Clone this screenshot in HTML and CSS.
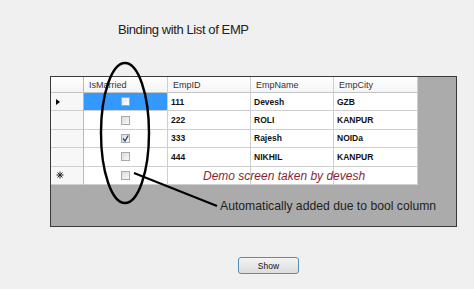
FILE: index.html
```html
<!DOCTYPE html>
<html lang="en">

<head>
    <meta charset="UTF-8">
    <title>Binding with List of EMP</title>
    <link rel="stylesheet" href="styles.css">
</head>

<body>
    <div class="page">
        <div class="title">Binding with List of EMP</div>

        <div class="grid-box">
            <div class="grid">
                <div class="cell head corner"></div>
                <div class="cell head">IsMarried</div>
                <div class="cell head">EmpID</div>
                <div class="cell head">EmpName</div>
                <div class="cell head">EmpCity</div>

                <div class="cell rowhead"><span class="current"></span></div>
                <div class="cell check selected"><span class="box"></span></div>
                <div class="cell data">111</div>
                <div class="cell data">Devesh</div>
                <div class="cell data">GZB</div>

                <div class="cell rowhead"></div>
                <div class="cell check"><span class="box"></span></div>
                <div class="cell data">222</div>
                <div class="cell data">ROLI</div>
                <div class="cell data">KANPUR</div>

                <div class="cell rowhead"></div>
                <div class="cell check"><span class="box">
                    <svg width="7" height="7" viewBox="0 0 7 7"><path d="M1 3.5 L3 6 L6.2 0.5" fill="none" stroke="#2b3f8c" stroke-width="1.3"/></svg>
                </span></div>
                <div class="cell data">333</div>
                <div class="cell data">Rajesh</div>
                <div class="cell data">NOIDa</div>

                <div class="cell rowhead"></div>
                <div class="cell check"><span class="box"></span></div>
                <div class="cell data">444</div>
                <div class="cell data">NIKHIL</div>
                <div class="cell data">KANPUR</div>

                <div class="cell rowhead">
                    <svg width="8" height="8" viewBox="0 0 8 8"><path d="M4 0.5V7.5M0.5 4H7.5M1.5 1.5L6.5 6.5M6.5 1.5L1.5 6.5" stroke="#222" stroke-width="1"/></svg>
                </div>
                <div class="cell check"><span class="box"></span></div>
                <div class="cell data"></div>
                <div class="cell data"></div>
                <div class="cell data"></div>
            </div>

            <div class="demo-note">Demo screen taken by devesh</div>
            <div class="caption">Automatically added due to bool column</div>
        </div>

        <button class="show-btn">Show</button>

        <!-- hand drawn marks over the screenshot -->
        <svg class="marks" width="474" height="289" viewBox="0 0 474 289">
            <ellipse cx="125" cy="133" rx="24" ry="70" fill="none" stroke="#000" stroke-width="2.4"/>
            <path d="M134 173 L217 206" stroke="#000" stroke-width="2"/>
        </svg>
    </div>
</body>

</html>
```

FILE: styles.css
```css
body {
    margin: 0;
    background: #f0f0f0;
    font-family: "Liberation Sans", Arial, sans-serif;
}

.page {
    position: relative;
    width: 474px;
    height: 289px;
    overflow: hidden;
}

.title {
    padding: 22px 0 0 118px;
    font-size: 13px;
    line-height: 16px;
    letter-spacing: -0.4px;
    color: #222;
}

.grid-box {
    position: relative;
    box-sizing: border-box;
    margin: 38px 0 0 50px;
    width: 407px;
    height: 151px;
    border: 1px solid #3a3a3a;
    background: #ababab;
}

.grid {
    display: grid;
    grid-template-columns: 33px 84px 83px 83px 84px;
    grid-template-rows: 16px repeat(5, 18.4px);
    width: 367px;
    background: #fff;
}

.cell {
    box-sizing: border-box;
    display: flex;
    align-items: center;
    border-right: 1px solid #cfcfcf;
    border-bottom: 1px solid #cfcfcf;
    padding-left: 3px;
    color: #111;
}

.head {
    padding-left: 5px;
    font-size: 9px;
    color: #333;
    background: linear-gradient(#ffffff, #f3f4f6);
    border-bottom-color: #c4c4c4;
}

.head.corner {
    border-right-color: #b8b8b8;
}

.rowhead {
    padding-left: 5px;
    background: #f7f7f7;
    border-right-color: #b8b8b8;
}

.current {
    width: 0;
    height: 0;
    border-top: 3.5px solid transparent;
    border-bottom: 3.5px solid transparent;
    border-left: 4px solid #000;
}

.data {
    font-size: 8.5px;
    font-weight: bold;
}

.check {
    justify-content: center;
    padding-left: 0;
}

.check.selected {
    background: #3399ff;
}

.box {
    box-sizing: border-box;
    display: flex;
    align-items: center;
    justify-content: center;
    width: 9px;
    height: 9px;
    border: 1px solid #a9a9a9;
    background: linear-gradient(135deg, #dcdcdc, #f8f8f8);
}

.selected .box {
    background: linear-gradient(135deg, #e6e6e6, #ffffff);
}

.demo-note {
    position: absolute;
    left: 152px;
    top: 92px;
    font-size: 12px;
    line-height: 14px;
    font-style: italic;
    color: #8a1f33;
}

.caption {
    margin-top: 14px;
    padding-left: 169px;
    font-size: 12.2px;
    line-height: 14px;
    color: #1e1e1e;
}

.show-btn {
    display: block;
    box-sizing: border-box;
    margin: 30px 0 0 238px;
    width: 61px;
    height: 17px;
    padding: 0;
    border: 1px solid #4f8fb8;
    border-radius: 3px;
    background: linear-gradient(#f4f4f4, #dcdcdc);
    font-family: "Liberation Sans", Arial, sans-serif;
    font-size: 8.5px;
    color: #111;
}

.marks {
    position: absolute;
    left: 0;
    top: 0;
    pointer-events: none;
}
```
